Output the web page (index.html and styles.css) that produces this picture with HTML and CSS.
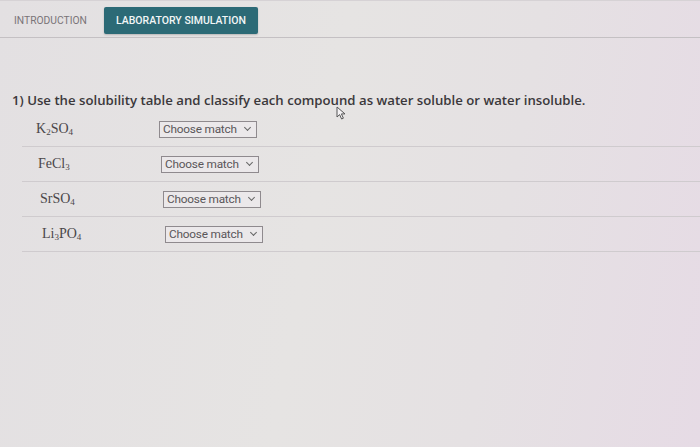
FILE: index.html
```html
<!DOCTYPE html>
<html>
<head>
<meta charset="utf-8">
<link rel="stylesheet" href="styles.css">
</head>
<body>
<div class="page">
  <nav class="tabs">
    <span class="tab">INTRODUCTION</span>
    <span class="tab active">LABORATORY SIMULATION</span>
  </nav>
  <main class="question">
    <p class="prompt">1) Use the solubility table and classify each compound as water soluble or water insoluble.</p>
    <div class="rows">
      <div class="row r1">
        <span class="compound">K<sub>2</sub>SO<sub>4</sub></span>
        <span class="select">Choose match <span class="chev"></span></span>
      </div>
      <div class="row r2">
        <span class="compound">FeCl<sub>3</sub></span>
        <span class="select">Choose match <span class="chev"></span></span>
      </div>
      <div class="row r3">
        <span class="compound">SrSO<sub>4</sub></span>
        <span class="select">Choose match <span class="chev"></span></span>
      </div>
      <div class="row r4">
        <span class="compound">Li<sub>3</sub>PO<sub>4</sub></span>
        <span class="select">Choose match <span class="chev"></span></span>
      </div>
    </div>
  </main>
  <svg class="cursor" width="12" height="14" viewBox="0 0 12 14"><path d="M1 1 L1 11 L3.6 8.6 L5.6 13 L7.4 12.2 L5.4 7.9 L9 7.9 Z" fill="#f4f2f4" stroke="#555" stroke-width="1" stroke-linejoin="round"/></svg>
</div>
</body>
</html>
```
FILE: styles.css
```css
html, body {
  margin: 0;
  padding: 0;
}
body {
  width: 700px;
  height: 447px;
  overflow: hidden;
  background: linear-gradient(100deg, #e3e0e2 0%, #e6e4e3 45%, #e5e1e3 70%, #e6dbe5 100%);
  font-family: Roboto, "Liberation Sans", sans-serif;
}
.page {
  position: relative;
  height: 447px;
}
.tabs {
  display: flex;
  align-items: center;
  height: 38px;
  padding: 3px 0 0 14px;
  box-sizing: border-box;
  border-bottom: 1px solid #c4c0c3;
  border-top: 1px solid #d6d2d5;
}
.tab {
  font-size: 10.3px;
  color: #7a7478;
  letter-spacing: 0;
}
.tab.active {
  margin-left: 17px;
  width: 154px;
  height: 27px;
  display: flex;
  align-items: center;
  justify-content: center;
  background: #2c6a76;
  color: #f2f6f6;
  font-size: 10.5px;
  font-weight: 500;
  border-radius: 2px;
  box-shadow: 0 1px 2px rgba(0,0,0,0.2);
}
.question {
  padding: 53px 0 0 12px;
}
.prompt {
  margin: 0;
  font-family: "Open Sans", "Liberation Sans", sans-serif;
  font-weight: 600;
  font-size: 13.2px;
  color: #3b383b;
  line-height: 18px;
}
.rows {
  margin: 3px 0 0 10px;
}
.row {
  display: flex;
  align-items: center;
  height: 35px;
  border-bottom: 1px solid #cfcbce;
  box-sizing: border-box;
}
.compound {
  width: 123px;
  padding-left: 14px;
  font-family: "Liberation Serif", "Times New Roman", serif;
  font-size: 14px;
  color: #4a4649;
}
.compound sub {
  font-size: 9px;
  vertical-align: -2px;
  line-height: 0;
}
.r2 .compound, .r2 .select { margin-left: 2px; }
.r3 .compound, .r3 .select { margin-left: 4px; }
.r4 .compound, .r4 .select { margin-left: 6px; }
.r2 .compound { width: 121px; }
.r3 .compound { width: 119px; }
.r4 .compound { width: 117px; }
.select {
  display: flex;
  align-items: center;
  width: 98px;
  height: 17px;
  box-sizing: border-box;
  border: 1px solid #8f8a8e;
  padding-left: 3px;
  font-size: 11.8px;
  color: #5a5659;
  background: #ebe8ea;
  letter-spacing: -0.2px;
}
.chev {
  width: 4px;
  height: 4px;
  border-right: 1.2px solid #666;
  border-bottom: 1.2px solid #666;
  transform: rotate(45deg);
  margin: -3px 0 0 8px;
}
.cursor {
  position: absolute;
  left: 336px;
  top: 106px;
}
```
